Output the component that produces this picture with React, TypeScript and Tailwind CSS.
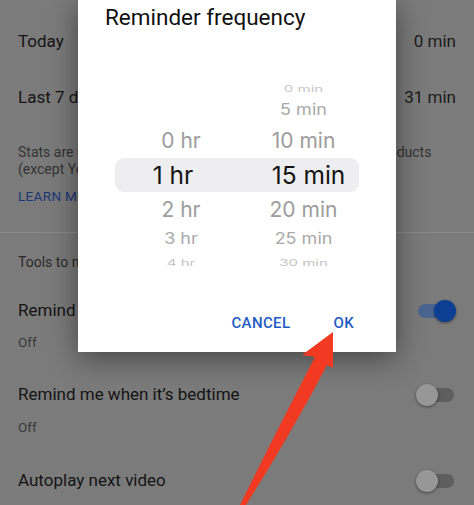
import React from "react";

type PickerRow = {
  h: number;
  hr?: string;
  min?: string;
  size: number;
  squash: string;
  color: string;
  selected?: boolean;
};

const rows: PickerRow[] = [
  { h: 20, min: "0 min", size: 15, squash: "scale-y-[0.6]", color: "text-[#c8c8c8]" },
  { h: 24, min: "5 min", size: 18, squash: "scale-y-[0.85]", color: "text-[#a9a9a9]" },
  { h: 36, hr: "0 hr", min: "10 min", size: 21, squash: "scale-y-100", color: "text-[#9c9c9c]" },
  { h: 34, hr: "1 hr", min: "15 min", size: 24.5, squash: "scale-y-100", color: "text-[#141414]", selected: true },
  { h: 34, hr: "2 hr", min: "20 min", size: 21, squash: "scale-y-100", color: "text-[#9c9c9c]" },
  { h: 26, hr: "3 hr", min: "25 min", size: 18, squash: "scale-y-[0.85]", color: "text-[#a9a9a9]" },
  { h: 20, hr: "4 hr", min: "30 min", size: 15, squash: "scale-y-[0.6]", color: "text-[#c4c4c4]" },
  { h: 10, hr: "5 hr", min: "35 min", size: 13, squash: "scale-y-[0.4]", color: "text-[#d6d6d6]" },
];

function Toggle({ on }: { on?: boolean }) {
  return (
    <div className="relative w-[40px] h-[22px] shrink-0">
      <div
        className={`absolute left-[2px] right-[2px] top-[4px] h-[14px] rounded-full ${
          on ? "bg-[#4b6591]" : "bg-[#5e5e5e]"
        }`}
      />
      <div
        className={`absolute top-0 w-[22px] h-[22px] rounded-full shadow-[0_1px_3px_rgba(0,0,0,0.45)] ${
          on ? "right-0 bg-[#0c3f93]" : "left-0 bg-[#979797]"
        }`}
      />
    </div>
  );
}

export default function App() {
  return (
    <div className="relative w-[474px] h-[505px] overflow-hidden bg-[#7b7b7b] font-['Roboto',sans-serif]">
      {/* Settings list (dimmed) */}
      <div className="flex flex-col px-[18px] pt-[14px] text-[#141414]">
        <div className="h-[56px] flex items-center justify-between text-[17px]">
          <span>Today</span>
          <span className="text-[#1c1c1c]">0 min</span>
        </div>
        <div className="h-[56px] flex items-center justify-between text-[17px]">
          <span>Last 7 days</span>
          <span className="text-[#1c1c1c]">31 min</span>
        </div>
        <p className="mt-[18px] text-[14px] leading-[17px] text-[#333]">
          Stats are based on your watch history across all YouTube products
          <br />
          (except YouTube Music)
        </p>
        <div className="mt-[10px] text-[13.5px] leading-[16px] text-[#1d3679] tracking-wide">LEARN MORE</div>
      </div>
      <div className="mt-[28px] h-px bg-[#8b8b8b]" />
      <div className="flex flex-col px-[18px] text-[#141414]">
        <div className="mt-[21px] text-[14px] leading-[16px] text-[#2a2a2a]">Tools to manage your time</div>
        <div className="mt-[30px] h-[22px] flex items-center justify-between text-[17px]">
          <span>Remind me to take a break</span>
          <Toggle on />
        </div>
        <div className="mt-[12px] text-[13.5px] leading-[16px] text-[#3a3a3a]">Off</div>
        <div className="mt-[34px] h-[22px] flex items-center justify-between text-[17px]">
          <span>Remind me when it’s bedtime</span>
          <Toggle />
        </div>
        <div className="mt-[13px] text-[13.5px] leading-[16px] text-[#3a3a3a]">Off</div>
        <div className="mt-[35px] h-[22px] flex items-center justify-between text-[17px]">
          <span>Autoplay next video</span>
          <Toggle />
        </div>
      </div>

      {/* Dialog */}
      <div className="absolute left-[78px] top-0 w-[318px] h-[352px] bg-white shadow-[0_6px_28px_rgba(0,0,0,0.45)] flex flex-col">
        <h2 className="pl-[27px] pt-[3px] text-[22.5px] leading-[28px] text-[#111]">Reminder frequency</h2>
        <div className="mx-[37px] mt-[47px] h-[194px] overflow-hidden flex flex-col font-['Inter',sans-serif]">
          {rows.map((r, i) => (
            <div
              key={i}
              style={{ height: r.h, fontSize: r.size }}
              className={`shrink-0 grid grid-cols-[132px_113px] items-center ${r.color} ${
                r.selected ? "bg-[#eeeef0] rounded-[9px]" : ""
              }`}
            >
              <span className={`text-center leading-none ${r.squash} ${r.selected ? "-translate-x-[8px]" : ""}`}>
                {r.hr ?? ""}
              </span>
              <span className={`text-center leading-none ${r.squash} ${r.selected ? "translate-x-[5px]" : ""}`}>
                {r.min}
              </span>
            </div>
          ))}
        </div>
        <div className="mt-auto mb-[14px] flex justify-end items-center gap-[27px] pr-[34px] text-[15px] font-medium text-[#1f5bc4] tracking-wide">
          <button className="px-2 py-1">CANCEL</button>
          <button className="px-2 py-1">OK</button>
        </div>
      </div>

      {/* Callout arrow */}
      <svg className="absolute inset-0 pointer-events-none" width="474" height="505" viewBox="0 0 474 505">
        <path
          d="M333 332 L302 355 L315 357 Q276 432 240 505 L246 505 Q292 432 327 365 L333 368 Z"
          fill="#f23a22"
        />
      </svg>
    </div>
  );
}
